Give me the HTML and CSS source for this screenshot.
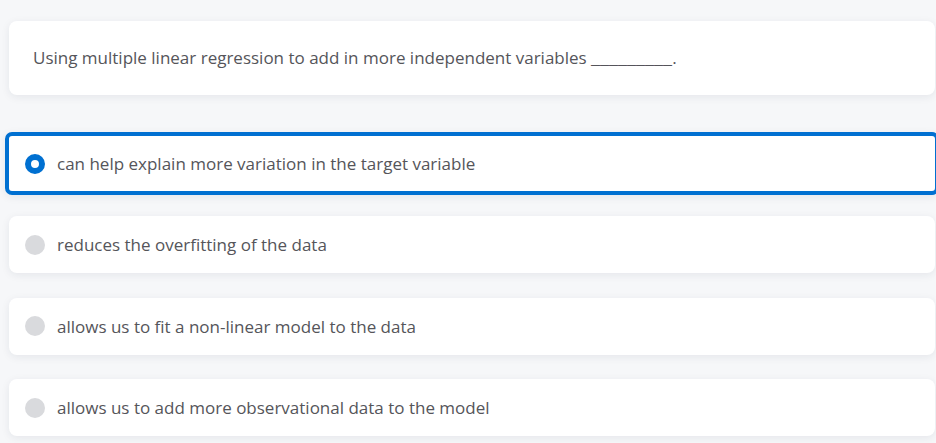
FILE: index.html
```html
<!DOCTYPE html>
<html lang="en">
<head>
<meta charset="utf-8">
<title>Question</title>
<link rel="stylesheet" href="styles.css">
</head>
<body>
<main class="quiz">
  <div class="card question"><span>Using multiple linear regression to add in more independent variables <span class="blank">_________</span>.</span></div>
  <ul class="options">
    <li class="card option selected"><span class="radio"></span><span class="label">can help explain more variation in the target variable</span></li>
    <li class="card option"><span class="radio"></span><span class="label">reduces the overfitting of the data</span></li>
    <li class="card option"><span class="radio"></span><span class="label">allows us to fit a non-linear model to the data</span></li>
    <li class="card option"><span class="radio"></span><span class="label">allows us to add more observational data to the model</span></li>
  </ul>
</main>
</body>
</html>
```
FILE: styles.css
```css
html, body {
  margin: 0;
  padding: 0;
  background: #f6f7f9;
  overflow: hidden;
}
body {
  font-family: "Open Sans", "Noto Sans", sans-serif;
  font-size: 17px;
  color: #55555a;
  width: 936px;
  height: 443px;
}
.quiz {
  padding: 21px 1px 0 9px;
  display: flex;
  flex-direction: column;
}
.card {
  background: #ffffff;
  border-radius: 8px;
  box-shadow: 0 2px 8px rgba(30, 40, 60, 0.08);
}
.question {
  height: 74px;
  display: flex;
  align-items: center;
  padding-left: 24px;
  padding-bottom: 2px;
  box-sizing: border-box;
}
.blank {
  display: inline-block;
  transform: scaleX(1.21);
  transform-origin: left center;
  margin-right: 14px;
}
.options {
  list-style: none;
  margin: 37px 0 0 0;
  padding: 0;
  display: flex;
  flex-direction: column;
  gap: 24.5px;
}
.option {
  height: 57px;
  display: flex;
  align-items: center;
  padding-left: 16px;
  gap: 12px;
  box-sizing: border-box;
}
.option.selected {
  height: 63px;
  margin-left: -4px;
  margin-right: -4px;
  margin-bottom: -3.5px;
  border: 4px solid #0070d1;
  padding-left: 16px;
  border-radius: 7px;
}
.radio {
  width: 20px;
  height: 20px;
  border-radius: 50%;
  background: #d9dadd;
  flex: none;
  box-sizing: border-box;
}
.selected .radio {
  background: #ffffff;
  border: 6px solid #0070d1;
}
```
